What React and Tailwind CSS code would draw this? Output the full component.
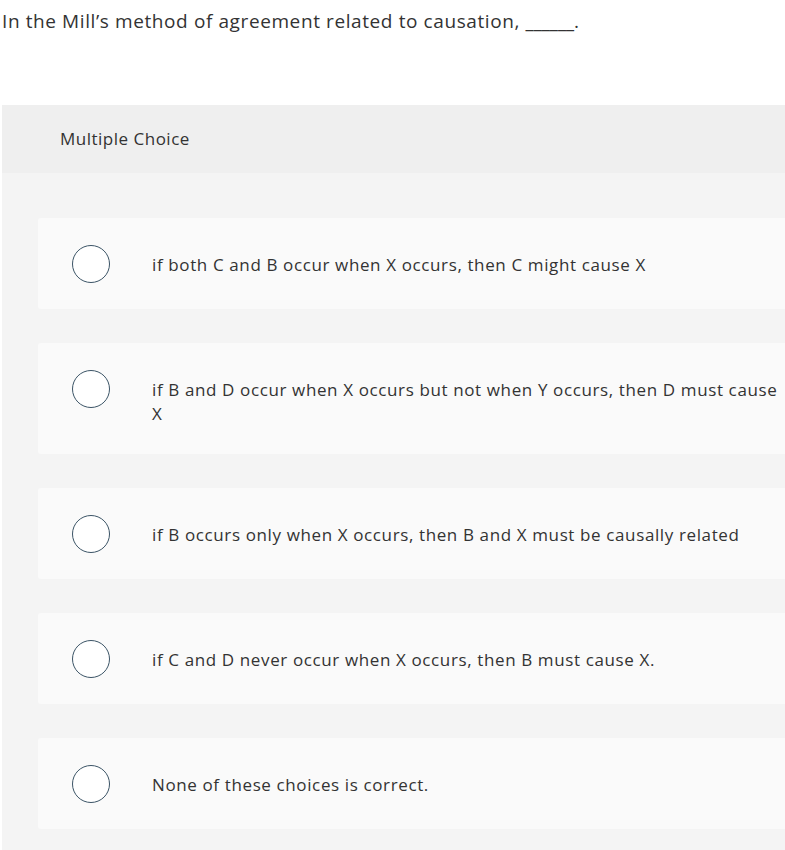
import React from 'react';

const choices = [
  'if both C and B occur when X occurs, then C might cause X',
  'if B and D occur when X occurs but not when Y occurs, then D must cause X',
  'if B occurs only when X occurs, then B and X must be causally related',
  'if C and D never occur when X occurs, then B must cause X.',
  'None of these choices is correct.',
];

const Radio = () => (
  <div className="w-[38px] h-[38px] shrink-0 rounded-full border-[1.5px] border-[#3b5466] bg-white" />
);

export default function App() {
  return (
    <div
      className="w-[785px] h-[850px] overflow-hidden bg-white text-[#333]"
      style={{ fontFamily: '"Open Sans", Arial, sans-serif' }}
    >
      <p className="pl-[2px] pt-[8px] text-[19px] leading-[26px] tracking-[0.6px]">
        In the Mill’s method of agreement related to causation,{' '}
        <span className="tracking-[0px] font-semibold">______</span>.
      </p>

      <div className="ml-[2px] mt-[71px] w-[830px]">
        <div className="h-[68px] bg-[#efefef] pl-[58px] flex items-center text-[17px] tracking-[0.5px]">
          Multiple Choice
        </div>
        <div className="bg-[#f4f4f4] pl-[36px] pt-[45px] pb-[40px] flex flex-col gap-[34px]">
          {choices.map((c, i) => (
            <div key={i} className="bg-[#fafafa] rounded-[3px] flex items-start pl-[34px] pt-[27px] pb-[26px]">
              <Radio />
              <div className="ml-[42px] mt-[8px] pb-[2px] w-[634px] text-[17px] leading-[24px] tracking-[0.62px]">{c}</div>
            </div>
          ))}
        </div>
      </div>
    </div>
  );
}
